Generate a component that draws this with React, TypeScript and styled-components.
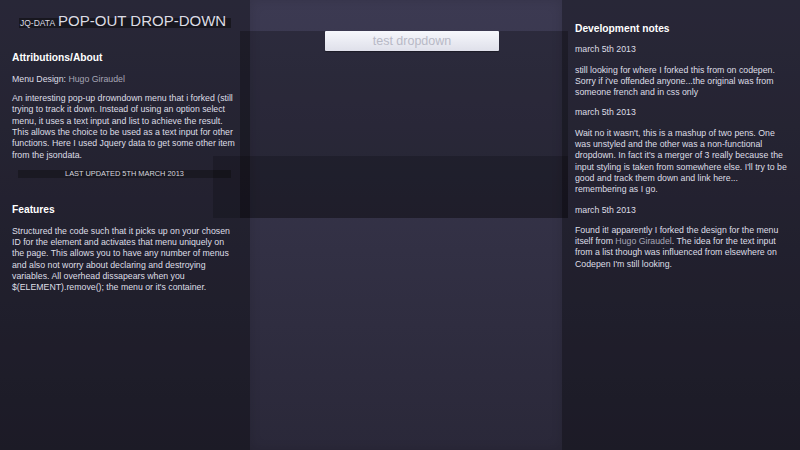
import React from 'react';
import styled, { createGlobalStyle } from 'styled-components';

const GlobalStyle = createGlobalStyle`
  html, body {
    margin: 0;
    padding: 0;
    height: 100%;
  }
  body {
    background: linear-gradient(180deg, #3c3a52 0%, #2a2839 100%);
    font-family: "Liberation Sans", Arial, sans-serif;
    color: #dcdce4;
    overflow: hidden;
  }
  #root {
    height: 100%;
  }
`;

// Layout
const Page = styled.div`
  position: relative;
  display: flex;
  height: 450px;
  width: 800px;
`;

const Sidebar = styled.aside<{ $width: number; $padLeft: number; $padRight: number }>`
  width: ${(p) => p.$width}px;
  flex-shrink: 0;
  box-sizing: border-box;
  padding: 0 ${(p) => p.$padRight}px 0 ${(p) => p.$padLeft}px;
  background: rgba(0, 0, 0, 0.32);
  display: flex;
  flex-direction: column;
`;

const Middle = styled.main`
  flex: 1;
  padding: 31px 0 0 75px;
  box-shadow: inset 0 0 12px rgba(0, 0, 0, 0.12);
`;

// Overlay panels from the dropdown
const Shade = styled.div<{ $left: number; $top: number; $width: number; $height: number; $alpha: number }>`
  position: absolute;
  left: ${(p) => p.$left}px;
  top: ${(p) => p.$top}px;
  width: ${(p) => p.$width}px;
  height: ${(p) => p.$height}px;
  background: rgba(0, 0, 0, ${(p) => p.$alpha});
  pointer-events: none;
  z-index: 2;
`;

// Text
const Title = styled.h1`
  display: flex;
  align-items: baseline;
  gap: 3px;
  margin: 12px 0 0 7px;
  padding-left: 1px;
  width: 211px;
  height: 17px;
  line-height: 17px;
  font-weight: normal;
  font-size: 15px;
  color: #dcdce4;
  text-transform: uppercase;
  background: linear-gradient(
    180deg,
    transparent 6px,
    #18171f 6px,
    #18171f 16px,
    transparent 16px
  );
`;

const TitleTag = styled.span`
  font-size: 8.5px;
`;

const Heading = styled.h3<{ $top: number }>`
  margin: ${(p) => p.$top}px 0 0;
  font-size: 10.25px;
  line-height: 11.8px;
  font-weight: bold;
  color: #ffffff;
`;

const Text = styled.p<{ $top: number }>`
  margin: ${(p) => p.$top}px 0 0;
  font-size: 8.75px;
  line-height: 11.3px;
  color: #dedee6;
`;

const Link = styled.a`
  color: #a6a6b6;
  text-decoration: none;
`;

const Updated = styled.div`
  margin: 9px 7px 0 6px;
  height: 8.5px;
  line-height: 8.5px;
  background: #1a1922;
  font-size: 7.4px;
  text-align: center;
  text-transform: uppercase;
  color: #d6d6de;
`;

const DropInput = styled.input`
  position: relative;
  z-index: 3;
  display: block;
  box-sizing: border-box;
  width: 174px;
  height: 20px;
  padding: 0;
  border: none;
  border-radius: 1px;
  background: linear-gradient(180deg, #f6f7fc 0%, #dfe0ea 100%);
  box-shadow: 0 1px 1px rgba(0, 0, 0, 0.35);
  font-family: "Liberation Sans", Arial, sans-serif;
  font-size: 12.5px;
  text-align: center;
  color: #555;
  outline: none;

  &::placeholder {
    color: #b8b9c6;
  }
`;

const notes = [
  {
    date: 'march 5th 2013',
    body: <>still looking for where I forked this from on codepen. Sorry if i've offended anyone...the original was from someone french and in css only</>,
  },
  {
    date: 'march 5th 2013',
    body: <>Wait no it wasn't, this is a mashup of two pens. One was unstyled and the other was a non-functional dropdown. In fact it's a merger of 3 really because the input styling is taken from somewhere else. I'll try to be good and track them down and link here... remembering as I go.</>,
  },
  {
    date: 'march 5th 2013',
    body: (
      <>
        Found it! apparently I forked the design for the menu itself from <Link href="#">Hugo Giraudel</Link>. The idea for the text input from a list though was influenced from elsewhere on Codepen I'm still looking.
      </>
    ),
  },
];

export default function App() {
  return (
    <>
      <GlobalStyle />
      <Page>
        <Sidebar $width={250} $padLeft={12} $padRight={12}>
          <Title>
            <TitleTag>jq-data</TitleTag>
            <span>Pop-out drop-down</span>
          </Title>

          <Heading $top={23}>Attributions/About</Heading>
          <Text $top={10}>
            Menu Design: <Link href="#">Hugo Giraudel</Link>
          </Text>
          <Text $top={8}>
            An interesting pop-up drowndown menu that i forked (still trying to track it down. Instead of using an option select menu, it uses a text input and list to achieve the result. This allows the choice to be used as a text input for other functions. Here I used Jquery data to get some other item from the jsondata.
          </Text>
          <Updated>Last updated 5th March 2013</Updated>

          <Heading $top={25.5}>Features</Heading>
          <Text $top={10}>
            Structured the code such that it picks up on your chosen ID for the element and activates that menu uniquely on the page. This allows you to have any number of menus and also not worry about declaring and destroying variables. All overhead dissapears when you $(ELEMENT).remove(); the menu or it's container.
          </Text>
        </Sidebar>

        <Middle>
          <DropInput placeholder="test dropdown" />
        </Middle>

        <Sidebar $width={238} $padLeft={13} $padRight={12}>
          <Heading $top={22.5}>Development notes</Heading>
          {notes.map((n, i) => (
            <React.Fragment key={i}>
              <Text $top={i === 0 ? 10 : 9}>{n.date}</Text>
              <Text $top={9}>{n.body}</Text>
            </React.Fragment>
          ))}
        </Sidebar>

        <Shade $left={240} $top={31} $width={328} $height={187} $alpha={0.25} />
        <Shade $left={213} $top={156} $width={355} $height={62} $alpha={0.18} />
      </Page>
    </>
  );
}
